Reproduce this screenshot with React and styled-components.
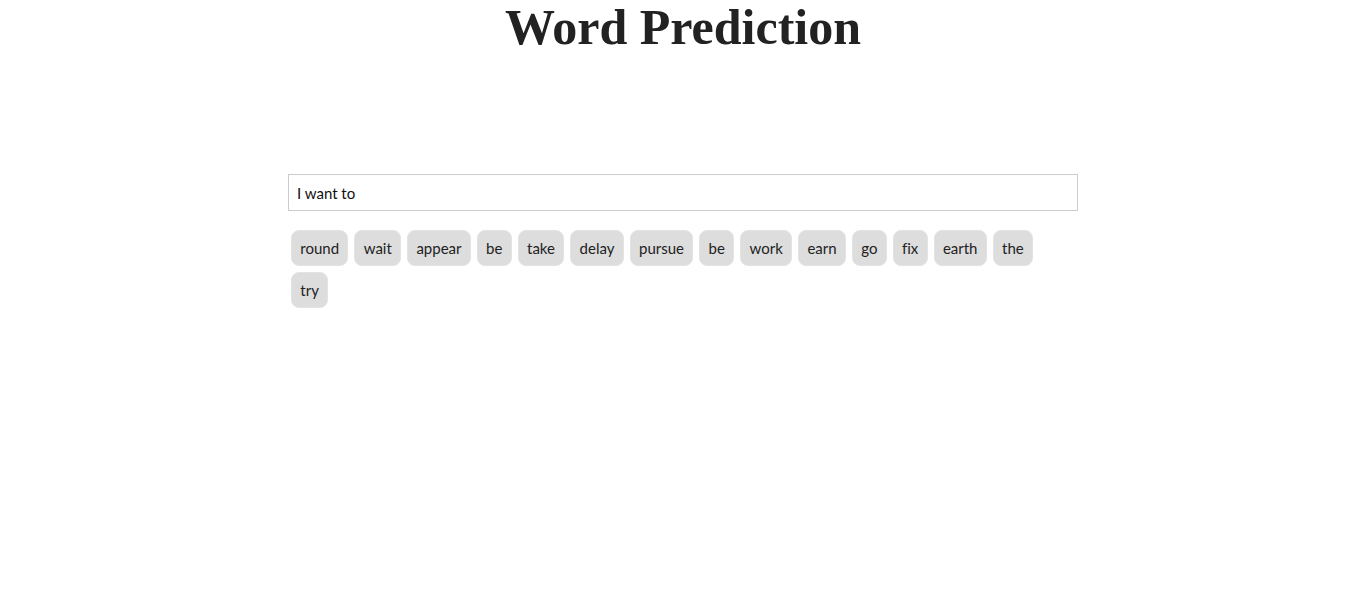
import React, { useState } from "react";
import styled, { createGlobalStyle } from "styled-components";

const GlobalStyle = createGlobalStyle`
  html, body {
    margin: 0;
    padding: 0;
    background: #fff;
  }
`;

const Page = styled.div`
  padding-left: 9px;
  display: flex;
  flex-direction: column;
  align-items: center;
`;

const Title = styled.h1`
  margin: 0 0 119px;
  font-family: "Liberation Serif", "Times New Roman", serif;
  font-size: 50px;
  font-weight: bold;
  line-height: 55px;
  color: #222;
`;

const Panel = styled.div`
  width: 790px;
`;

const Input = styled.input`
  display: block;
  box-sizing: border-box;
  width: 100%;
  height: 37px;
  padding: 0 8px;
  border: 1px solid #ccc;
  font-family: Lato, "Open Sans", sans-serif;
  font-size: 15px;
  color: #111;
  outline: none;
`;

const Chips = styled.div`
  display: flex;
  flex-wrap: wrap;
  margin-top: 16px;
  max-width: 782px;
`;

const Chip = styled.button`
  box-sizing: border-box;
  height: 36px;
  margin: 3px;
  padding: 0 8.3px;
  border: 1px solid #e3e3e3;
  border-radius: 8px;
  background: #dddddd;
  font-family: Lato, "Open Sans", sans-serif;
  font-size: 15px;
  font-variant-ligatures: none;
  color: #222;
  cursor: pointer;
`;

const words = [
  "round", "wait", "appear", "be", "take", "delay", "pursue", "be",
  "work", "earn", "go", "fix", "earth", "the", "try",
];

export default function App() {
  const [text, setText] = useState("I want to");
  return (
    <>
      <GlobalStyle />
      <Page>
        <Title>Word Prediction</Title>
        <Panel>
          <Input value={text} onChange={(e) => setText(e.target.value)} />
          <Chips>
            {words.map((w, i) => (
              <Chip key={i} onClick={() => setText(text + " " + w)}>
                {w}
              </Chip>
            ))}
          </Chips>
        </Panel>
      </Page>
    </>
  );
}
